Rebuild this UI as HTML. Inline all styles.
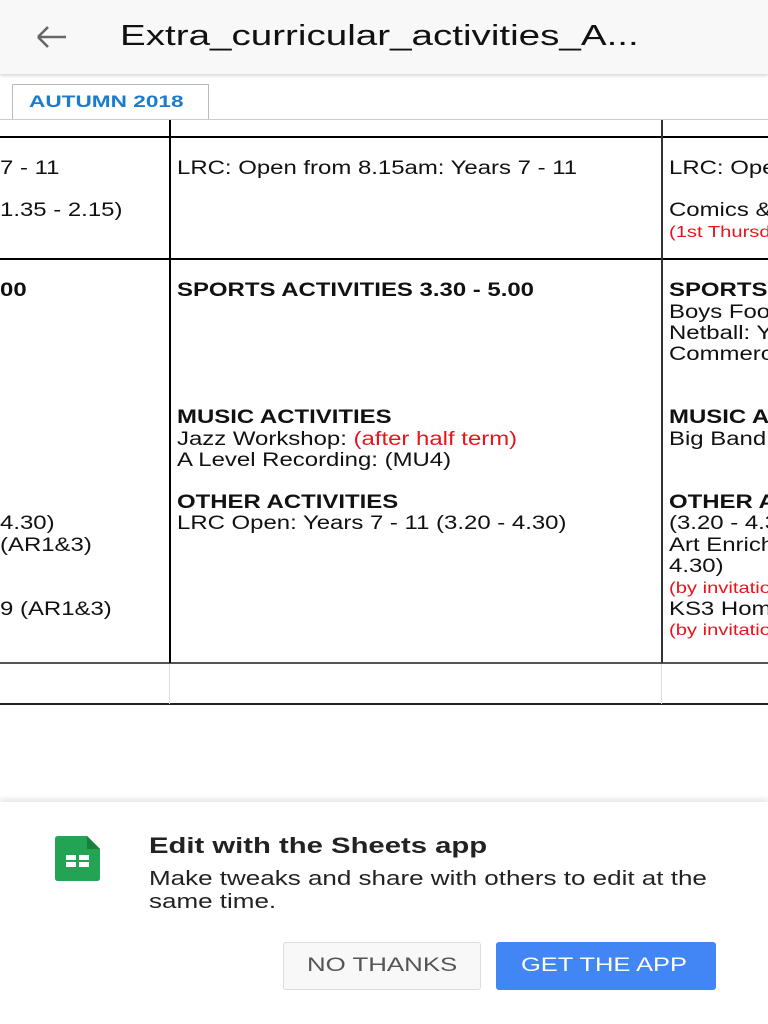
<!DOCTYPE html>
<html><head><style>
*{margin:0;padding:0;box-sizing:border-box}
body{width:768px;height:1024px;background:#fff;position:relative;overflow:hidden;font-family:"Liberation Sans",Arial,sans-serif;color:#111}
.s{transform:scaleX(1.33);transform-origin:0 0}
.t{position:absolute;font-size:19px;white-space:nowrap;line-height:21px;transform:scaleX(1.26);transform-origin:0 0}
.b{font-weight:bold}
.r{color:#e8141c;font-size:16px}
.rr{color:#e8141c}
.h{position:absolute;background:#000}
.g{position:absolute;background:#ddd}
</style></head><body>
<div style="position:absolute;left:0;top:0;width:768px;height:74px;background:#f8f8f8;box-shadow:0 2px 3px rgba(0,0,0,.15)"></div>
<svg style="position:absolute;left:34px;top:24px" width="34" height="26" viewBox="0 0 34 26"><path d="M4 13H32M4 13L14 3M4 13L14 23" stroke="#666" stroke-width="2.6" fill="none"/></svg>
<div class="s" style="position:absolute;left:120px;top:20px;font-size:29px;color:#111;white-space:nowrap">Extra_curricular_activities_A...</div>
<div style="position:absolute;left:12px;top:84px;width:197px;height:36px;border:1.5px solid #bbb;border-bottom:none;background:#fff"></div>
<div class="s" style="position:absolute;left:29px;top:92px;color:#1a7cd0;font-weight:bold;font-size:17px;white-space:nowrap">AUTUMN 2018</div>
<div class="g" style="left:0;top:119px;width:768px;height:1px;background:#ccc"></div>
<div class="h" style="left:0;top:136px;width:768px;height:2px"></div>
<div class="h" style="left:0;top:258px;width:768px;height:2px"></div>
<div class="h" style="left:0;top:662px;width:768px;height:2px;background:#555"></div>
<div class="h" style="left:0;top:703px;width:768px;height:2px;background:#222"></div>
<div class="h" style="left:169px;top:120px;width:2px;height:543px"></div>
<div class="h" style="left:661px;top:120px;width:2px;height:543px;background:#333"></div>
<div class="g" style="left:169px;top:664px;width:1px;height:40px"></div>
<div class="g" style="left:661px;top:664px;width:1px;height:40px"></div>

<div class="t" style="left:0;top:158px">7 - 11</div>
<div class="t" style="left:0;top:200px">1.35 - 2.15)</div>
<div class="t b" style="left:0;top:280px">00</div>
<div class="t" style="left:0;top:513px">4.30)</div>
<div class="t" style="left:0;top:535px">(AR1&amp;3)</div>
<div class="t" style="left:0;top:599px">9 (AR1&amp;3)</div>

<div class="t" style="left:177px;top:158px">LRC: Open from 8.15am: Years 7 - 11</div>
<div class="t b" style="left:177px;top:280px">SPORTS ACTIVITIES 3.30 - 5.00</div>
<div class="t b" style="left:177px;top:407px">MUSIC ACTIVITIES</div>
<div class="t" style="left:177px;top:429px">Jazz Workshop: <span class="rr">(after half term)</span></div>
<div class="t" style="left:177px;top:450px">A Level Recording: (MU4)</div>
<div class="t b" style="left:177px;top:492px">OTHER ACTIVITIES</div>
<div class="t" style="left:177px;top:513px">LRC Open: Years 7 - 11 (3.20 - 4.30)</div>

<div class="t" style="left:669px;top:158px">LRC: Open</div>
<div class="t" style="left:669px;top:200px">Comics &amp;</div>
<div class="t r" style="left:669px;top:222px">(1st Thursday</div>
<div class="t b" style="left:669px;top:280px">SPORTS</div>
<div class="t" style="left:669px;top:302px">Boys Foot</div>
<div class="t" style="left:669px;top:323px">Netball: Y</div>
<div class="t" style="left:669px;top:344px">Commerc</div>
<div class="t b" style="left:669px;top:407px">MUSIC A</div>
<div class="t" style="left:669px;top:429px">Big Band:</div>
<div class="t b" style="left:669px;top:492px">OTHER A</div>
<div class="t" style="left:669px;top:513px">(3.20 - 4.3</div>
<div class="t" style="left:669px;top:535px">Art Enrich</div>
<div class="t" style="left:669px;top:556px">4.30)</div>
<div class="t r" style="left:669px;top:578px">(by invitation</div>
<div class="t" style="left:669px;top:599px">KS3 Hom</div>
<div class="t r" style="left:669px;top:620px">(by invitation</div>

<div style="position:absolute;left:0;top:802px;width:768px;height:222px;background:#fff;box-shadow:0 -3px 5px rgba(0,0,0,.1)"></div>
<svg style="position:absolute;left:55px;top:836px" width="46" height="45" viewBox="0 0 46 45"><path d="M3 0H32L45 13V42Q45 45 42 45H3Q0 45 0 42V3Q0 0 3 0Z" fill="#23a455"/><path d="M32 0V13H45Z" fill="#188038"/><rect x="11" y="19" width="10" height="5" fill="#fff"/><rect x="24" y="19" width="10" height="5" fill="#fff"/><rect x="11" y="26" width="10" height="5" fill="#fff"/><rect x="24" y="26" width="10" height="5" fill="#fff"/></svg>
<div class="s" style="position:absolute;left:149px;top:833px;font-size:22px;font-weight:bold;color:#222;white-space:nowrap">Edit with the Sheets app</div>
<div style="position:absolute;left:149px;top:868px;font-size:20px;line-height:23px;color:#222;white-space:nowrap;transform:scaleX(1.3);transform-origin:0 0">Make tweaks and share with others to edit at the<br>same time.</div>
<div style="position:absolute;left:283px;top:942px;width:198px;height:48px;border:1px solid #ddd;border-radius:3px;background:#f8f8f8"></div>
<div style="position:absolute;left:307px;top:955px;color:#555;font-size:19px;white-space:nowrap;transform:scaleX(1.36);transform-origin:0 0">NO THANKS</div>
<div style="position:absolute;left:496px;top:942px;width:220px;height:48px;border-radius:3px;background:#4285f4"></div>
<div style="position:absolute;left:521px;top:955px;color:#fff;font-size:19px;white-space:nowrap;transform:scaleX(1.34);transform-origin:0 0">GET THE APP</div>
</body></html>
